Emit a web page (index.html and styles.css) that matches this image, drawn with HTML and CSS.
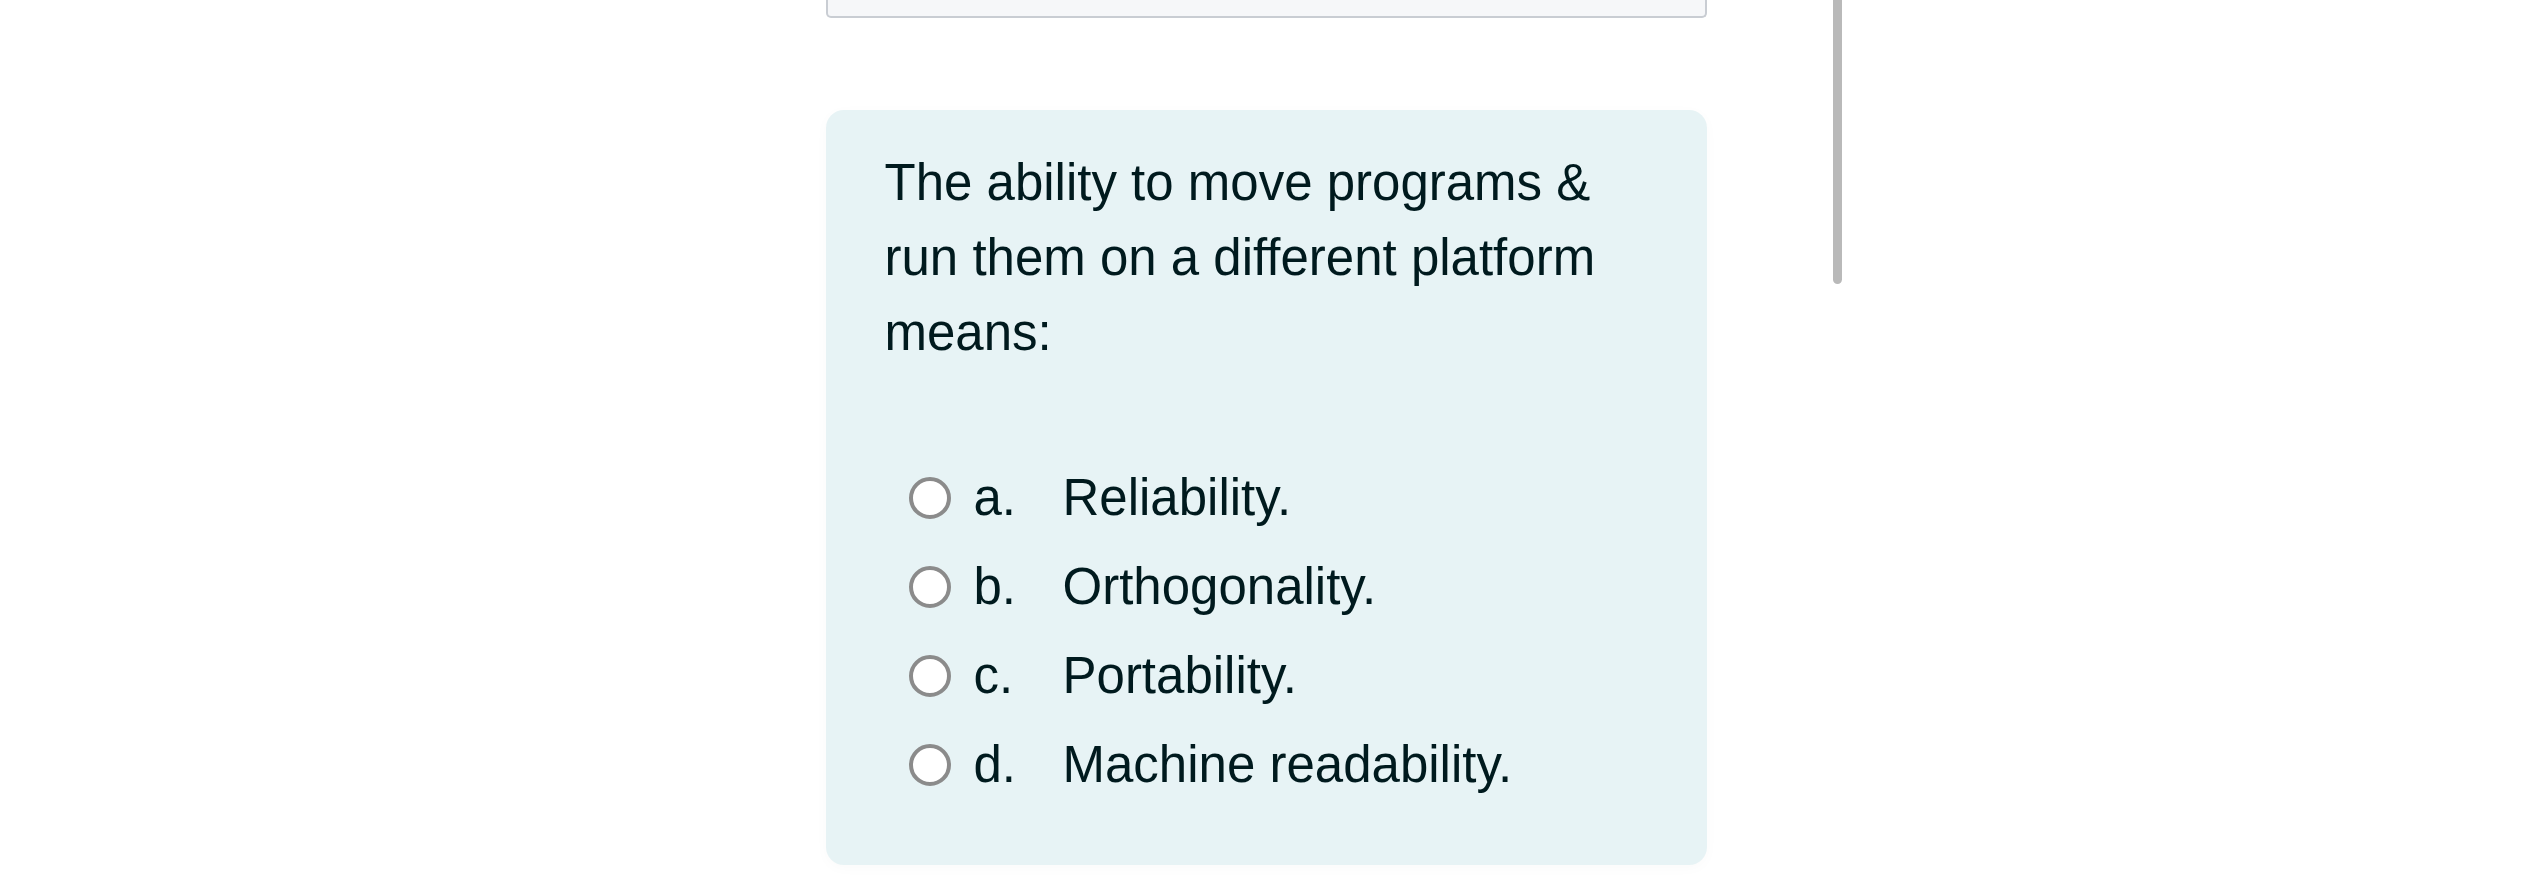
FILE: index.html
```html
<!DOCTYPE html>
<html lang="en">
<head>
<meta charset="utf-8">
<title>Question</title>
<link rel="stylesheet" href="styles.css">
</head>
<body>
<div class="page">
  <div class="column">
    <div class="info"></div>
    <div class="formulation">
      <div class="qtext">The ability to move programs &amp; run them on a different platform means:</div>
      <div class="answers">
        <label class="option"><span class="radio"></span><span class="letter">a.</span><span class="text">Reliability.</span></label>
        <label class="option"><span class="radio"></span><span class="letter">b.</span><span class="text">Orthogonality.</span></label>
        <label class="option"><span class="radio"></span><span class="letter">c.</span><span class="text">Portability.</span></label>
        <label class="option"><span class="radio"></span><span class="letter">d.</span><span class="text">Machine readability.</span></label>
      </div>
    </div>
  </div>
  <div class="scrollbar"></div>
</div>
</body>
</html>
```

FILE: styles.css
```css
html, body {
  margin: 0;
  padding: 0;
  background: #ffffff;
}
body {
  font-family: "Liberation Sans", Arial, Helvetica, sans-serif;
  color: #001a1e;
  overflow: hidden;
}
.page {
  position: relative;
  height: 894px;
  display: flex;
  justify-content: center;
}
.column {
  width: 881px;
}
.info {
  box-sizing: border-box;
  height: 18px;
  background: #f6f7f9;
  border: 2px solid #c9cdd3;
  border-top: none;
  border-radius: 0 0 5px 5px;
}
.formulation {
  margin-top: 92px;
  background: #e7f3f5;
  border-radius: 18px;
  padding: 35px 58px 56px 59px;
  box-shadow: 0 3px 14px rgba(0, 0, 0, 0.025);
}
.qtext {
  font-size: 51px;
  line-height: 75px;
}
.answers {
  margin-top: 83px;
  padding-left: 24px;
}
.option {
  display: flex;
  align-items: center;
  height: 89px;
  font-size: 51px;
}
.radio {
  flex: none;
  box-sizing: border-box;
  width: 42px;
  height: 42px;
  border: 4px solid #8b8b8b;
  border-radius: 50%;
  background: #ffffff;
  margin-right: 23px;
}
.letter {
  flex: none;
  width: 89px;
}
.scrollbar {
  position: absolute;
  left: 1833px;
  top: 0;
  width: 9px;
  height: 284px;
  background: #b9b9b9;
  border-radius: 0 0 5px 5px;
}
```
